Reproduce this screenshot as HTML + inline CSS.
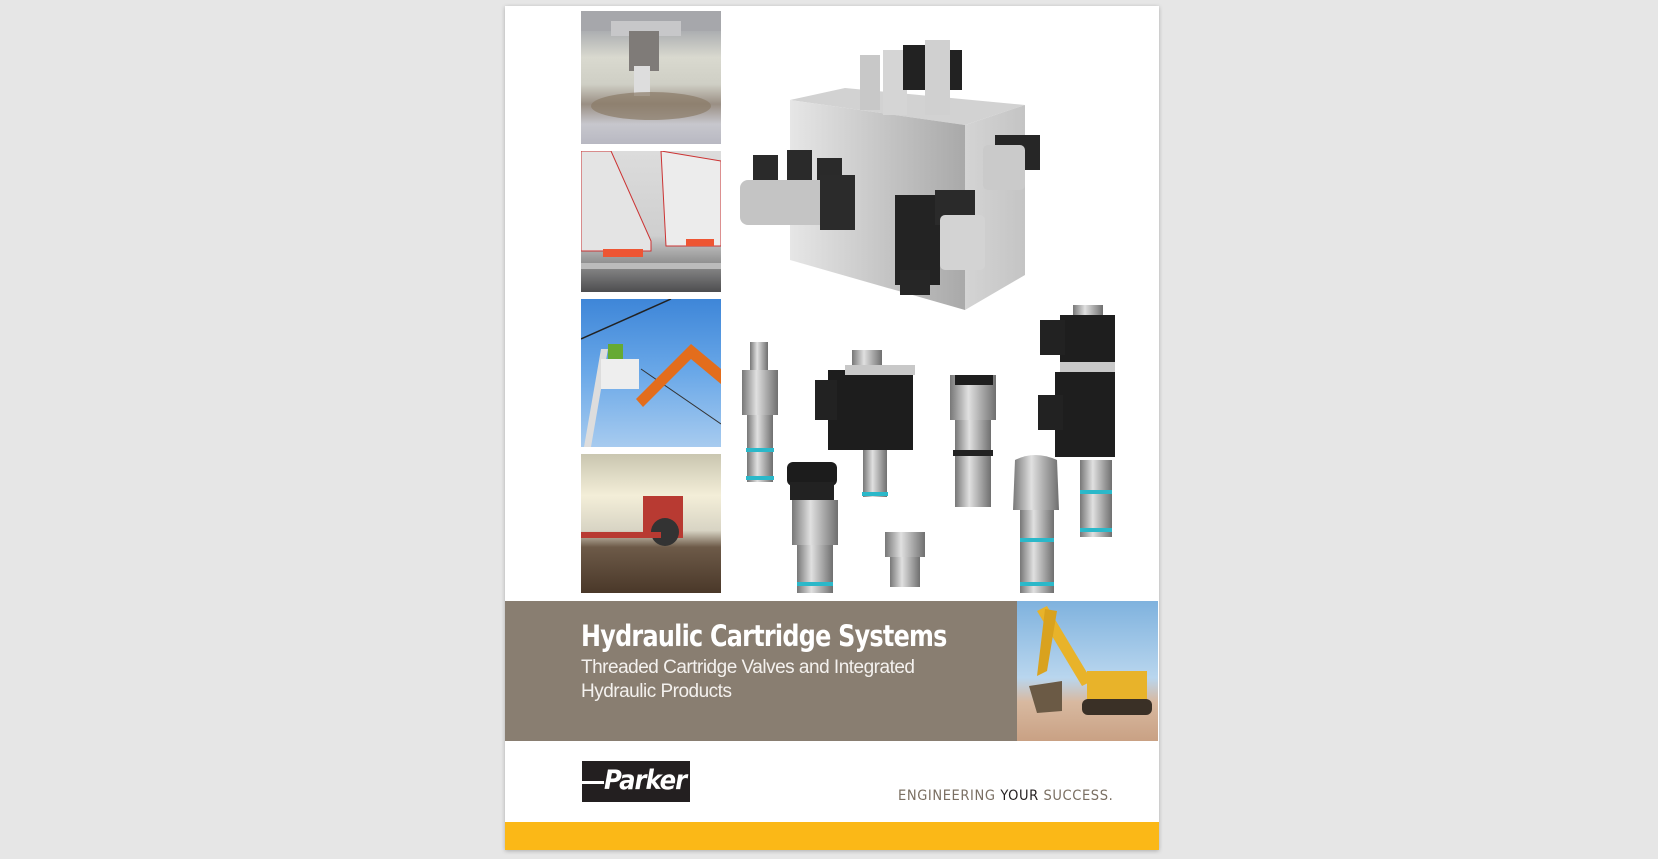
<!DOCTYPE html>
<html><head><meta charset="utf-8"><style>
*{margin:0;padding:0;box-sizing:border-box}
body{width:1658px;height:859px;background:#e6e6e6;position:relative;overflow:hidden;font-family:"Liberation Sans",sans-serif}
.page{position:absolute;left:505px;top:6px;width:654px;height:844px;background:#fff;box-shadow:0 1px 4px rgba(0,0,0,.25)}
.img{position:absolute;left:581px;width:140px;overflow:hidden}
.band{position:absolute;left:505px;top:601px;width:512px;height:140px;background:#897e71}
.t1{position:absolute;left:581px;top:619px;color:#fff;font:bold 29px "DejaVu Sans Condensed","Liberation Sans",sans-serif;letter-spacing:-0.8px;transform:scaleX(0.915);transform-origin:left}
.t2{position:absolute;left:581px;top:656px;color:#f4f1ee;font:19px/24px "Liberation Sans",sans-serif;letter-spacing:-0.5px}
.exc{position:absolute;left:1017px;top:601px;width:141px;height:140px;overflow:hidden;background:linear-gradient(#7fb2de 0%,#b9d6ee 55%,#d8b9a0 72%,#c9a184 100%)}
.logo{position:absolute;left:582px;top:761px;width:108px;height:41px;background:#231f20;color:#fff;font:bold italic 27px "DejaVu Sans Condensed",sans-serif;letter-spacing:-1px}
.tag{position:absolute;left:898px;top:788px;font:14.5px "DejaVu Sans Condensed","Liberation Sans",sans-serif;color:#7a6f62;letter-spacing:0.6px}
.yel{position:absolute;left:505px;top:822px;width:654px;height:28px;background:#fbb817}
</style></head><body>
<div class="page"></div>

<div class="img" style="top:11px;height:133px;background:linear-gradient(180deg,#8a8e9a 0%,#d9d9cf 35%,#cfcfc5 55%,#9a8f84 70%,#c7c7cd 85%,#b8b8c2 100%)">
<svg width="140" height="133"><rect x="0" y="0" width="140" height="20" fill="#a6a7ab"/><rect x="30" y="10" width="70" height="15" fill="#c7c7c9"/><rect x="48" y="20" width="30" height="40" fill="#7f7b78"/><rect x="53" y="55" width="16" height="30" fill="#ddd"/><ellipse cx="70" cy="95" rx="60" ry="14" fill="#8a7a66" opacity=".7"/></svg></div>
<div class="img" style="top:151px;height:141px;background:linear-gradient(180deg,#dcdcdc 0%,#cfcfcf 60%,#8e8e8e 80%,#4d4d4f 100%)">
<svg width="140" height="141"><polygon points="0,0 30,0 70,90 70,100 0,100" fill="#e4e4e4" stroke="#c33" stroke-width="1"/><polygon points="80,0 140,10 140,95 85,95" fill="#ececec" stroke="#c33" stroke-width="1"/><rect x="22" y="98" width="40" height="8" fill="#e53"/><rect x="105" y="88" width="28" height="7" fill="#e53"/><rect x="0" y="112" width="140" height="6" fill="#bbb"/></svg></div>
<div class="img" style="top:299px;height:148px;background:linear-gradient(180deg,#3e86d8 0%,#6aa8e8 50%,#a7cbef 100%)">
<svg width="140" height="148"><line x1="0" y1="40" x2="90" y2="0" stroke="#222" stroke-width="1.5"/><line x1="60" y1="70" x2="140" y2="125" stroke="#333" stroke-width="1"/><polygon points="20,50 27,50 10,148 3,148" fill="#ddd"/><rect x="20" y="60" width="38" height="30" fill="#eee"/><polygon points="55,100 110,45 140,70 140,85 110,60 62,108" fill="#e36d1c"/><rect x="27" y="45" width="15" height="15" fill="#6a3"/></svg></div>
<div class="img" style="top:454px;height:139px;background:linear-gradient(180deg,#c9c6b0 0%,#f3eed8 30%,#d8d4c4 55%,#6d5a48 67%,#4a3829 100%)">
<svg width="140" height="139"><rect x="62" y="42" width="40" height="42" fill="#b83a32"/><circle cx="84" cy="78" r="14" fill="#333"/><rect x="0" y="78" width="80" height="6" fill="#b83a32"/></svg></div>

<svg style="position:absolute;left:725px;top:10px" width="340" height="310">
<defs><linearGradient id="m" x1="0" x2="1"><stop offset="0" stop-color="#e6e6e6"/><stop offset="1" stop-color="#a9a9a9"/></linearGradient>
<linearGradient id="m2" x1="0" x2="1"><stop offset="0" stop-color="#d4d4d4"/><stop offset="1" stop-color="#c4c4c4"/></linearGradient></defs>
<polygon points="65,90 120,78 300,95 240,115" fill="#d2d2d2"/>
<polygon points="65,90 240,115 240,300 65,250" fill="url(#m)"/>
<polygon points="240,115 300,95 300,265 240,300" fill="url(#m2)"/>
<rect x="135" y="45" width="20" height="55" fill="#c8c8c8"/><rect x="158" y="40" width="24" height="65" fill="#d5d5d5"/><rect x="178" y="35" width="22" height="45" fill="#222"/><rect x="200" y="30" width="25" height="75" fill="#d0d0d0"/><rect x="225" y="40" width="12" height="40" fill="#222"/>
<rect x="28" y="145" width="25" height="35" fill="#2a2a2a"/><rect x="62" y="140" width="25" height="35" fill="#2a2a2a"/><rect x="92" y="148" width="25" height="35" fill="#2a2a2a"/>
<rect x="15" y="170" width="115" height="45" rx="8" fill="#c4c4c4"/><rect x="95" y="165" width="35" height="55" fill="#2b2b2b"/>
<rect x="270" y="125" width="45" height="35" fill="#262626"/><rect x="258" y="135" width="42" height="45" rx="5" fill="#cacaca"/>
<rect x="170" y="185" width="45" height="90" fill="#232323"/><rect x="210" y="180" width="40" height="35" fill="#2a2a2a"/><rect x="215" y="205" width="45" height="55" rx="5" fill="#d3d3d3"/><rect x="175" y="260" width="30" height="25" fill="#262626"/>
</svg>

<svg style="position:absolute;left:735px;top:300px" width="400" height="300">
<defs><linearGradient id="s" x1="0" x2="1"><stop offset="0" stop-color="#777"/><stop offset=".4" stop-color="#e0e0e0"/><stop offset="1" stop-color="#6f6f6f"/></linearGradient></defs>
<g fill="url(#s)">
<rect x="15" y="42" width="18" height="30"/><rect x="7" y="70" width="36" height="45"/><rect x="12" y="115" width="26" height="67"/>
<rect x="117" y="50" width="30" height="30"/><rect x="128" y="150" width="24" height="47"/>
<rect x="215" y="75" width="46" height="45"/><rect x="220" y="120" width="36" height="87"/>
<rect x="57" y="200" width="46" height="45"/><rect x="62" y="245" width="36" height="48"/>
<rect x="150" y="232" width="40" height="25"/><rect x="155" y="257" width="30" height="30"/>
<path d="M280 160 Q300 150 322 160 L324 210 L278 210 Z"/><rect x="285" y="210" width="34" height="83"/>
<rect x="338" y="5" width="30" height="15"/><rect x="345" y="160" width="32" height="77"/>
</g>
<rect x="93" y="70" width="85" height="80" fill="#1d1d1d"/><rect x="110" y="65" width="70" height="10" fill="#c8c8c8"/><rect x="80" y="80" width="22" height="40" fill="#222"/>
<rect x="220" y="75" width="38" height="10" fill="#1e1e1e"/><rect x="218" y="150" width="40" height="6" fill="#222"/>
<rect x="52" y="162" width="50" height="24" rx="6" fill="#1c1c1c"/><rect x="55" y="182" width="44" height="18" fill="#222"/>
<rect x="325" y="15" width="55" height="50" fill="#1e1e1e"/><rect x="305" y="20" width="25" height="35" fill="#222"/><rect x="325" y="62" width="55" height="12" fill="#c8c8c8"/><rect x="320" y="72" width="60" height="85" fill="#1e1e1e"/><rect x="303" y="95" width="25" height="35" fill="#222"/>
<g fill="#2bb8c9"><rect x="11" y="148" width="28" height="4"/><rect x="11" y="176" width="28" height="4"/><rect x="127" y="192" width="26" height="4"/><rect x="62" y="282" width="36" height="4"/><rect x="285" y="238" width="34" height="4"/><rect x="285" y="282" width="34" height="4"/><rect x="345" y="190" width="32" height="4"/><rect x="345" y="228" width="32" height="4"/></g>
</svg>

<div class="band"></div>
<div class="t1">Hydraulic Cartridge Systems</div>
<div class="t2">Threaded Cartridge Valves and Integrated<br>Hydraulic Products</div>
<div class="exc"><svg width="141" height="140"><polygon points="20,10 30,5 75,80 65,85" fill="#e8b32a"/><polygon points="28,8 40,10 30,70 20,75" fill="#d9a21e"/><rect x="70" y="70" width="60" height="30" fill="#e8b32a"/><rect x="65" y="98" width="70" height="16" rx="6" fill="#3a3026"/><polygon points="12,85 45,80 45,110 20,112" fill="#6b5a45"/></svg></div>

<div class="logo"><div style="position:absolute;left:0;top:20px;width:22px;height:3px;background:#fff"></div><span style="position:absolute;left:22px;top:4px">Parker</span></div>
<div class="tag">ENGINEERING <span style="color:#231f20">YOUR</span> SUCCESS.</div>
<div class="yel"></div>
</body></html>
